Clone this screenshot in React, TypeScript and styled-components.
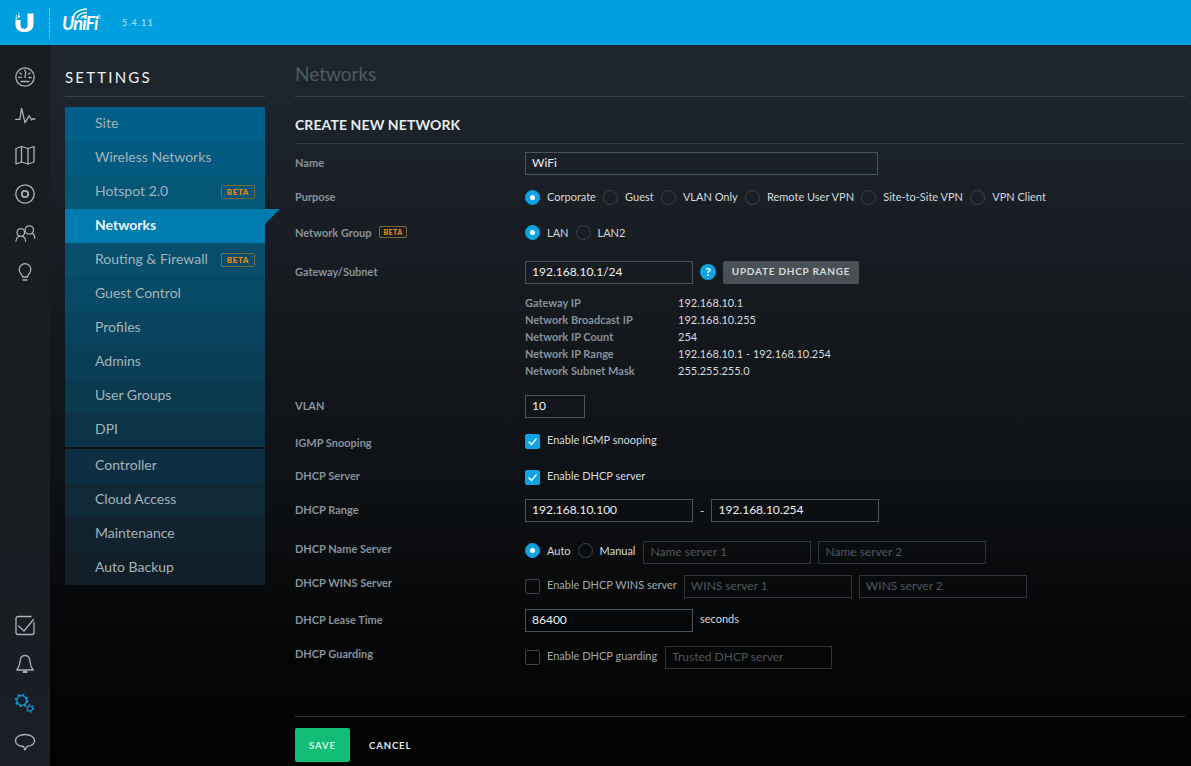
import React from "react";
import styled, { createGlobalStyle } from "styled-components";

const GlobalStyle = createGlobalStyle`
  html, body {
    margin: 0;
    padding: 0;
    height: 100%;
    background: #000;
    font-family: "Lato", "Liberation Sans", sans-serif;
    overflow: hidden;
  }
  * { box-sizing: border-box; }
`;

const Page = styled.div`
  width: 1191px;
  height: 766px;
  display: flex;
  flex-direction: column;
  overflow: hidden;
`;

const TopBar = styled.header`
  height: 45px;
  flex: none;
  background: #009fdf;
  display: flex;
  align-items: center;
`;

const LogoCell = styled.div`
  width: 50px;
  height: 30px;
  display: flex;
  align-items: center;
  justify-content: center;
  border-right: 1px dotted rgba(255, 255, 255, 0.65);
`;

const Brand = styled.div`
  position: relative;
  margin-left: 12px;
  width: 48px;
  height: 32px;
`;

const BrandName = styled.span`
  position: absolute;
  left: 0;
  top: 5px;
  color: #fff;
  font-size: 18px;
  font-style: italic;
  font-weight: 700;
  line-height: 22px;
  letter-spacing: -0.9px;
`;

const BrandMark = styled.span`
  position: absolute;
  left: 35px;
  top: 6px;
  color: #d8f1fb;
  font-size: 5px;
  line-height: 8px;
`;

const BrandArcs = styled.svg`
  position: absolute;
  left: 10px;
  top: 1px;
`;

const Version = styled.span`
  margin-left: 12px;
  color: #93d7f3;
  font-size: 9px;
  font-weight: 700;
  letter-spacing: 1.1px;
`;

const Body = styled.div`
  flex: 1;
  display: flex;
  min-height: 0;
  background: linear-gradient(180deg, #1f262e 0%, #171c22 30%, #0e1115 60%, #060708 80%, #020202 100%);
`;

const Rail = styled.nav`
  width: 50px;
  flex: none;
  display: flex;
  flex-direction: column;
  justify-content: space-between;
  background: linear-gradient(180deg, #171c21 0%, #191e24 85%, #1a1f25 100%);
  padding: 12px 0 5px;
`;

const RailGroup = styled.div`
  display: flex;
  flex-direction: column;
`;

const RailButton = styled.div`
  width: 50px;
  height: 39px;
  display: flex;
  align-items: center;
  justify-content: center;
  color: #a9b4b8;
`;

const SettingsColumn = styled.aside`
  width: 200px;
  flex: none;
  margin-left: 15px;
`;

const SettingsTitle = styled.h2`
  margin: 0;
  height: 52px;
  padding-top: 23px;
  border-bottom: 1px solid #3d444c;
  color: #f0f3f4;
  font-size: 15px;
  font-weight: 400;
  line-height: 18px;
  letter-spacing: 2.2px;
`;

const Menu = styled.ul`
  list-style: none;
  margin: 10px 0 0;
  padding: 0;
`;

const MenuItem = styled.li<{ $bg: string; $active?: boolean; $split?: boolean }>`
  position: relative;
  height: 34px;
  padding: 0 10px 4px 30px;
  display: flex;
  align-items: center;
  justify-content: space-between;
  background: ${(p) => p.$bg};
  color: ${(p) => (p.$active ? "#e9f4f9" : "#a3b3bb")};
  font-size: 14px;
  font-weight: ${(p) => (p.$active ? 700 : 400)};
  margin-top: ${(p) => (p.$split ? "2px" : "0")};
`;

const ActiveTip = styled.span`
  position: absolute;
  left: 100%;
  top: 0;
  width: 0;
  height: 0;
  border-top: 15px solid #007bad;
  border-right: 15px solid transparent;
`;

const Beta = styled.span<{ $small?: boolean }>`
  display: inline-block;
  border: 1px solid #7a6a3c;
  border-radius: 2px;
  color: #ea8c0e;
  font-size: ${(p) => (p.$small ? 7 : 8)}px;
  font-weight: 900;
  letter-spacing: ${(p) => (p.$small ? 0.4 : 0.6)}px;
  line-height: ${(p) => (p.$small ? 10 : 12)}px;
  padding: 0 ${(p) => (p.$small ? 4 : 5)}px;
  height: ${(p) => (p.$small ? 12 : 14)}px;
  margin-top: ${(p) => (p.$small ? 0 : 3)}px;
`;

const Content = styled.main`
  width: 890px;
  flex: none;
  margin-left: 30px;
`;

const PageTitle = styled.h1`
  margin: 0;
  height: 52px;
  padding-top: 16px;
  border-bottom: 1px solid #3d444c;
  color: #505a62;
  font-size: 19px;
  font-weight: 400;
  line-height: 26px;
`;

const SectionTitle = styled.h3`
  margin: 0;
  height: 47px;
  padding-top: 19px;
  border-bottom: 1px solid #353c44;
  color: #e8ecee;
  font-size: 14px;
  font-weight: 700;
  line-height: 18px;
  letter-spacing: 0.1px;
`;

const Row = styled.div<{ $h?: number; $top?: number }>`
  display: flex;
  align-items: center;
  height: ${(p) => p.$h ?? 34}px;
  margin-top: ${(p) => p.$top ?? 0}px;
`;

const Label = styled.div<{ $nudge?: number }>`
  width: 230px;
  flex: none;
  display: flex;
  align-items: center;
  gap: 7px;
  margin-top: ${(p) => p.$nudge ?? -2}px;
  color: #87929a;
  font-size: 11px;
  font-weight: 700;
`;

const Field = styled.div<{ $gap?: number }>`
  display: flex;
  align-items: center;
  gap: ${(p) => p.$gap ?? 0}px;
`;

const Input = styled.input<{ $w: number }>`
  width: ${(p) => p.$w}px;
  height: 23px;
  margin: 0;
  padding: 0 6px 1px;
  background: transparent;
  border: 1px solid #4c545b;
  color: #eef1f2;
  font-family: inherit;
  font-size: 12px;
  outline: none;
  &:disabled {
    border-color: #2e343a;
  }
  &::placeholder {
    color: #4f575e;
    opacity: 1;
    font-size: 12px;
  }
`;

const RadioDot = styled.span<{ $on?: boolean; $lift?: number }>`
  width: 15px;
  height: 15px;
  flex: none;
  border-radius: 50%;
  display: inline-flex;
  align-items: center;
  justify-content: center;
  margin-top: ${(p) => -(p.$lift ?? 0)}px;
  background: ${(p) => (p.$on ? "#0ea3e2" : "transparent")};
  border: 1px solid ${(p) => (p.$on ? "#0ea3e2" : "#3c434a")};
  &::after {
    content: "";
    width: 5px;
    height: 5px;
    border-radius: 50%;
    background: ${(p) => (p.$on ? "#fff" : "transparent")};
  }
`;

const OptionText = styled.span<{ $dim?: boolean; $lift?: number; $after?: number }>`
  margin: ${(p) => -(p.$lift ?? 0)}px ${(p) => p.$after ?? 7}px 0 7px;
  color: ${(p) => (p.$dim ? "#a0a8ad" : "#d5dade")};
  font-size: 11px;
  white-space: nowrap;
`;

const CheckBox = styled.span<{ $on?: boolean; $drop?: number }>`
  width: 15px;
  height: 15px;
  flex: none;
  border-radius: 2px;
  display: inline-flex;
  align-items: center;
  justify-content: center;
  margin-top: ${(p) => p.$drop ?? 0}px;
  background: ${(p) => (p.$on ? "#0ea3e2" : "transparent")};
  border: 1px solid ${(p) => (p.$on ? "#0ea3e2" : "#3c434a")};
`;

const HelpBadge = styled.span`
  width: 16px;
  height: 16px;
  margin: 0 7px;
  border-radius: 50%;
  background: #0ea3e2;
  color: #fff;
  font-size: 12px;
  font-weight: 900;
  line-height: 16px;
  text-align: center;
`;

const GreyButton = styled.button`
  width: 136px;
  height: 23px;
  padding: 0 0 2px;
  border: 0;
  border-radius: 2px;
  background: #4a5056;
  color: #d6dadc;
  font-family: inherit;
  font-size: 10px;
  font-weight: 700;
  letter-spacing: 0.75px;
`;

const InfoBlock = styled.dl`
  margin: 0 0 0 230px;
  display: grid;
  grid-template-columns: 153px 1fr;
  grid-auto-rows: 17px;
  align-items: center;
  font-size: 11px;
`;

const InfoKey = styled.dt`
  color: #87929a;
  font-weight: 700;
`;

const InfoValue = styled.dd`
  margin: 0;
  color: #d5dade;
`;

const Dash = styled.span`
  margin: 0 7px;
  color: #d5dade;
  font-size: 12px;
`;

const Footer = styled.div`
  margin-top: 39px;
  padding-top: 11px;
  border-top: 1px solid #333a41;
  display: flex;
  align-items: center;
  gap: 19px;
`;

const SaveButton = styled.button`
  width: 55px;
  height: 34px;
  padding: 0;
  border: 0;
  border-radius: 2px;
  background: #12bd76;
  color: #dcf6ea;
  font-family: inherit;
  font-size: 9.5px;
  font-weight: 700;
  letter-spacing: 0.9px;
`;

const CancelButton = styled.button`
  padding: 0;
  border: 0;
  background: none;
  color: #e3e7e9;
  font-family: inherit;
  font-size: 9.5px;
  font-weight: 700;
  letter-spacing: 0.9px;
`;

const Icon = ({ children, color = "currentColor" }: { children: React.ReactNode; color?: string }) => (
  <svg width="24" height="24" viewBox="0 0 24 24" fill="none" stroke={color} strokeWidth="1.3" strokeLinecap="round" strokeLinejoin="round">
    {children}
  </svg>
);

const menuTop = [
  { name: "Site", bg: "#005f89" },
  { name: "Wireless Networks", bg: "#025a80" },
  { name: "Hotspot 2.0", bg: "#045677", beta: true },
  { name: "Networks", bg: "#007bad", active: true },
  { name: "Routing & Firewall", bg: "#064e6c", beta: true },
  { name: "Guest Control", bg: "#074a66" },
  { name: "Profiles", bg: "#08445e" },
  { name: "Admins", bg: "#093f56" },
  { name: "User Groups", bg: "#0a3a4f" },
  { name: "DPI", bg: "#0b3448" },
];

const menuBottom = [
  { name: "Controller", bg: "#0e2f41" },
  { name: "Cloud Access", bg: "#102936" },
  { name: "Maintenance", bg: "#11232f" },
  { name: "Auto Backup", bg: "#121e27" },
];

const purposes = ["Corporate", "Guest", "VLAN Only", "Remote User VPN", "Site-to-Site VPN", "VPN Client"];

const gatewayInfo = [
  ["Gateway IP", "192.168.10.1"],
  ["Network Broadcast IP", "192.168.10.255"],
  ["Network IP Count", "254"],
  ["Network IP Range", "192.168.10.1 - 192.168.10.254"],
  ["Network Subnet Mask", "255.255.255.0"],
];

const Tick = () => (
  <svg width="11" height="11" viewBox="0 0 11 11" fill="none" stroke="#fff" strokeWidth="1.2">
    <path d="M1.5 5.5 L4.5 8.5 L9.5 2.5" />
  </svg>
);

const Logo = () => (
  <svg width="19" height="19" viewBox="0 0 19 19" fill="#fff">
    <path d="M0.5 7 H5.5 V12 C5.5 14.8 7 15.8 9.5 15.8 C11.6 15.8 12.5 14.6 12.5 12 V0.5 H18.5 V11 C18.5 16.4 15 19 9.5 19 C4 19 0.5 16.4 0.5 11 Z" />
    <rect x="3" y="0.3" width="1.2" height="1.2" />
    <rect x="0.8" y="2.2" width="1.4" height="1.4" />
    <rect x="3" y="2.5" width="2" height="2" />
    <rect x="0.6" y="4.6" width="1.8" height="1.8" />
  </svg>
);

export default function App() {
  return (
    <Page>
      <GlobalStyle />
      <TopBar>
        <LogoCell>
          <Logo />
        </LogoCell>
        <Brand>
          <BrandName>UniFi</BrandName>
          <BrandMark>®</BrandMark>
          <BrandArcs width="16" height="11" viewBox="0 0 16 11" fill="none" stroke="#fff" strokeWidth="1.5">
            <path d="M1 10 C2 4.5 8 1 15 1" />
            <path d="M5 10.5 C6 7 10 4.5 15 4.5" />
            <path d="M9 10.5 C10 8.8 12 7.8 15 7.8" />
          </BrandArcs>
        </Brand>
        <Version>5.4.11</Version>
      </TopBar>
      <Body>
        <Rail>
          <RailGroup>
            <RailButton>
              <Icon>
                <circle cx="12" cy="12" r="9.2" />
                <path d="M12 12.5 L12.8 7" />
                <path d="M7 8 L8.5 9.2 M5.8 12.5 H8 M17 8 L15.5 9.2 M18.2 12.5 H16 M12 5 V6.2 M8 16.5 H16" />
              </Icon>
            </RailButton>
            <RailButton>
              <Icon>
                <path d="M2.7 15.3 H6.8 L8.6 4.3 L12 18.7 L16.3 11.7 L18.6 16 L19.4 15 H22" />
              </Icon>
            </RailButton>
            <RailButton>
              <Icon>
                <path d="M3 5.5 L8.5 3.5 L15 5.5 L21 3.5 V19 L15 21 L8.5 19 L3 21 Z" />
                <path d="M8.5 3.5 V19 M15 5.5 V21" />
              </Icon>
            </RailButton>
            <RailButton>
              <Icon>
                <circle cx="12" cy="12" r="9.2" />
                <circle cx="12" cy="12" r="3.2" strokeWidth="1.8" />
              </Icon>
            </RailButton>
            <RailButton>
              <Icon>
                <circle cx="7.8" cy="11.5" r="3.8" />
                <circle cx="16.3" cy="9" r="4.2" />
                <path d="M3 20 C3.2 17.8 4.3 16.2 5.8 15 M9.8 15 C11.3 16.2 12.4 17.8 12.6 20 M19.5 12 C20.8 13.2 21.6 15 21.8 17" />
              </Icon>
            </RailButton>
            <RailButton>
              <Icon>
                <path d="M9.5 17 C9.5 14.5 6.2 13.5 6.2 9.5 A5.8 5.8 0 0 1 17.8 9.5 C17.8 13.5 14.5 14.5 14.5 17 Z" />
                <path d="M10 20 H14" />
              </Icon>
            </RailButton>
          </RailGroup>
          <RailGroup>
            <RailButton>
              <Icon>
                <path d="M21 9.5 V19.5 A2 2 0 0 1 19 21.5 H5 A2 2 0 0 1 3 19.5 V5.5 A2 2 0 0 1 5 3.5 H18" />
                <path d="M5.5 13 L11 18 L20.5 6.5" />
              </Icon>
            </RailButton>
            <RailButton>
              <Icon>
                <path d="M12 3.5 C8.5 3.5 7.2 6 7 9.5 C6.8 13.5 5.5 16 3.8 18 H20.2 C18.5 16 17.2 13.5 17 9.5 C16.8 6 15.5 3.5 12 3.5 Z" />
                <path d="M10.5 20 H13.5" strokeWidth="2" />
              </Icon>
            </RailButton>
            <RailButton>
              <Icon color="#0ea3e2">
                <circle cx="8.7" cy="9.5" r="4.8" />
                <circle cx="8.7" cy="9.5" r="6" strokeWidth="1.6" strokeDasharray="2 2.7" strokeLinecap="butt" />
                <circle cx="17" cy="17.5" r="2.6" strokeWidth="1" />
                <circle cx="17" cy="17.5" r="3.5" strokeWidth="1.3" strokeDasharray="1.6 2.07" strokeLinecap="butt" />
              </Icon>
            </RailButton>
            <RailButton>
              <Icon>
                <path d="M12 4.5 C6.5 4.5 2.5 7 2.5 10.5 C2.5 14 6 16.2 10.5 16.5 L12 20 L14 16.4 C18.3 16 21.5 13.8 21.5 10.5 C21.5 7 17.5 4.5 12 4.5 Z" />
              </Icon>
            </RailButton>
          </RailGroup>
        </Rail>

        <SettingsColumn>
          <SettingsTitle>SETTINGS</SettingsTitle>
          <Menu>
            {menuTop.map((m) => (
              <MenuItem key={m.name} $bg={m.bg} $active={m.active}>
                {m.name}
                {m.beta && <Beta>BETA</Beta>}
                {m.active && <ActiveTip />}
              </MenuItem>
            ))}
            {menuBottom.map((m, i) => (
              <MenuItem key={m.name} $bg={m.bg} $split={i === 0}>
                {m.name}
              </MenuItem>
            ))}
          </Menu>
        </SettingsColumn>

        <Content>
          <PageTitle>Networks</PageTitle>
          <SectionTitle>CREATE NEW NETWORK</SectionTitle>

          <Row $top={2}>
            <Label>Name</Label>
            <Input $w={353} defaultValue="WiFi" />
          </Row>
          <Row>
            <Label>Purpose</Label>
            <Field>
              {purposes.map((p, i) => (
                <React.Fragment key={p}>
                  <RadioDot $on={i === 0} />
                  <OptionText $lift={2} $after={7.2}>{p}</OptionText>
                </React.Fragment>
              ))}
            </Field>
          </Row>
          <Row $h={36}>
            <Label $nudge={0}>
              Network Group <Beta $small>BETA</Beta>
            </Label>
            <Field>
              <RadioDot $on />
              <OptionText>LAN</OptionText>
              <RadioDot />
              <OptionText>LAN2</OptionText>
            </Field>
          </Row>
          <Row $h={44}>
            <Label>Gateway/Subnet</Label>
            <Field>
              <Input $w={168} defaultValue="192.168.10.1/24" />
              <HelpBadge>?</HelpBadge>
              <GreyButton>UPDATE DHCP RANGE</GreyButton>
            </Field>
          </Row>
          <InfoBlock>
            {gatewayInfo.map(([k, v]) => (
              <React.Fragment key={k}>
                <InfoKey>{k}</InfoKey>
                <InfoValue>{v}</InfoValue>
              </React.Fragment>
            ))}
          </InfoBlock>
          <Row $top={10}>
            <Label>VLAN</Label>
            <Input $w={60} defaultValue="10" />
          </Row>
          <Row>
            <Label $nudge={4}>IGMP Snooping</Label>
            <Field>
              <CheckBox $on $drop={3}>
                <Tick />
              </CheckBox>
              <OptionText $lift={2}>Enable IGMP snooping</OptionText>
            </Field>
          </Row>
          <Row $top={2}>
            <Label>DHCP Server</Label>
            <Field>
              <CheckBox $on $drop={3}>
                <Tick />
              </CheckBox>
              <OptionText $lift={2}>Enable DHCP server</OptionText>
            </Field>
          </Row>
          <Row>
            <Label>DHCP Range</Label>
            <Field>
              <Input $w={168} defaultValue="192.168.10.100" />
              <Dash>-</Dash>
              <Input $w={168} defaultValue="192.168.10.254" />
            </Field>
          </Row>
          <Row $top={8}>
            <Label $nudge={-8}>DHCP Name Server</Label>
            <Field>
              <RadioDot $on $lift={3} />
              <OptionText $lift={4}>Auto</OptionText>
              <RadioDot $lift={3} />
              <OptionText $lift={4} $after={8}>Manual</OptionText>
              <Field $gap={7}>
                <Input $w={168} disabled placeholder="Name server 1" />
                <Input $w={168} disabled placeholder="Name server 2" />
              </Field>
            </Field>
          </Row>
          <Row>
            <Label $nudge={-8}>DHCP WINS Server</Label>
            <Field>
              <CheckBox />
              <OptionText $dim $lift={4}>Enable DHCP WINS server</OptionText>
              <Field $gap={7}>
                <Input $w={168} disabled placeholder="WINS server 1" />
                <Input $w={168} disabled placeholder="WINS server 2" />
              </Field>
            </Field>
          </Row>
          <Row>
            <Label>DHCP Lease Time</Label>
            <Field>
              <Input $w={168} defaultValue="86400" />
              <OptionText $lift={4}>seconds</OptionText>
            </Field>
          </Row>
          <Row $h={40}>
            <Label $nudge={-8}>DHCP Guarding</Label>
            <Field>
              <CheckBox />
              <OptionText $dim $lift={4} $after={8}>Enable DHCP guarding</OptionText>
              <Input $w={167} disabled placeholder="Trusted DHCP server" />
            </Field>
          </Row>

          <Footer>
            <SaveButton>SAVE</SaveButton>
            <CancelButton>CANCEL</CancelButton>
          </Footer>
        </Content>
      </Body>
    </Page>
  );
}
